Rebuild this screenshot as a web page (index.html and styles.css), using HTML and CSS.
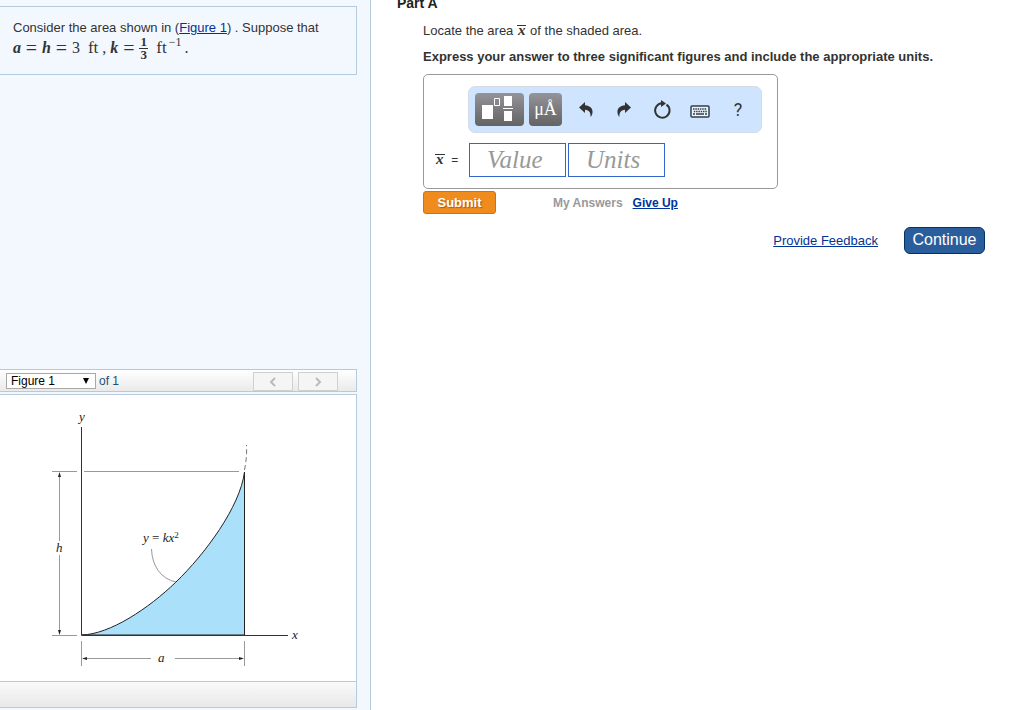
FILE: index.html
```html
<!DOCTYPE html>
<html lang="en">
<head>
    <meta charset="utf-8">
    <title>Centroid of an Area</title>
    <link rel="stylesheet" href="styles.css">
</head>
<body>
    <div class="page">
        <aside class="sidebar">
            <div class="problem">
                Consider the area shown in (<a href="#figure">Figure 1</a>) . Suppose that
                <div class="formula">
                    <i>a</i><span class="eq">=</span><i>h</i><span class="eq">=</span><span>3</span><span class="unit">ft</span><span class="comma">,</span><i>k</i><span class="eq">=</span><span class="fraction"><span>1</span><span>3</span></span><span class="unit">ft<sup>&minus;1</sup></span><span class="stop">.</span>
                </div>
            </div>

            <div class="figure-panel" id="figure">
                <div class="figure-nav">
                    <span class="select-wrap">
                        <select id="figureSelect" aria-label="Figure">
                            <option>Figure 1</option>
                        </select>
                    </span>
                    <label for="figureSelect">of 1</label>
                    <div class="nav-buttons">
                        <button type="button" aria-label="Previous figure">
                            <svg width="8" height="10" viewBox="0 0 8 10"><path d="M6 1L2 5L6 9"/></svg>
                        </button>
                        <button type="button" aria-label="Next figure">
                            <svg width="8" height="10" viewBox="0 0 8 10"><path d="M2 1L6 5L2 9"/></svg>
                        </button>
                    </div>
                </div>
                <div class="figure-body">
                    <svg class="diagram" width="356" height="286" viewBox="0 0 356 286">
                        <!-- shaded area under the curve -->
                        <path class="area" d="M82 240C110 239 148 214 176 187C205 159 240 112 244.500 77V240Z"/>
                        <path class="dashed" d="M244.500 75C246 67 247 60 246.500 50"/>
                        <!-- axes -->
                        <path class="axis" d="M81.500 32V240.500H288"/>
                        <!-- dimension lines -->
                        <path class="dim" d="M52 76.500H77M84 76.500H239M52 240.500H77M59.500 80V146M59.500 160V238"/>
                        <path class="dim" d="M81.500 246V271M244.500 246V271M84 263.500H151M175 263.500H242"/>
                        <path class="dim" d="M151.500 154C152 171 161 184 176 187"/>
                        <path class="arrow" d="M59.500 77L61 82H58ZM59.500 240L61 235H58ZM82 263.500L87 262V265ZM244 263.500L239 262V265Z"/>
                        <text x="79" y="26">y</text>
                        <text x="292" y="244">x</text>
                        <text x="56" y="157">h</text>
                        <text x="158" y="267">a</text>
                        <text x="143" y="147">y <tspan class="upright">=</tspan> kx<tspan class="power" dy="-4">2</tspan></text>
                    </svg>
                </div>
                <div class="figure-footer"></div>
            </div>
        </aside>

        <main class="content">
            <h2>Part A</h2>
            <div class="part">
                <p>Locate the area <i class="xbar">x</i> of the shaded area.</p>
                <p><b>Express your answer to three significant figures and include the appropriate units.</b></p>

                <form class="answer">
                    <div class="answer-box">
                        <div class="toolbar">
                            <button type="button" class="tool tool-wide" aria-label="Templates">
                                <svg width="49" height="33" viewBox="0 0 49 33">
                                    <path fill="#fff" d="M7 12H18V26H7ZM29 3H37V13H29ZM29 18H37V28H29ZM28 15H38V16H28Z"/>
                                    <path fill="none" stroke="#fff" d="M19.500 5.500H24.500V12.500H19.500Z"/>
                                </svg>
                            </button>
                            <button type="button" class="tool">&mu;&Aring;</button>
                            <div class="icons">
                                <button type="button" aria-label="Undo">
                                    <svg width="16" height="16" viewBox="0 0 16 16"><path fill="#333" d="M1 5.500L7 0V3.200C12 3.500 15 6.500 14.500 10.500C14.300 12.500 13.500 14 12.500 15C13 11.500 11.500 8 7 7.800V11Z"/></svg>
                                </button>
                                <button type="button" aria-label="Redo">
                                    <svg width="16" height="16" viewBox="0 0 16 16"><path fill="#333" d="M15 5.500L9 0V3.200C4 3.500 1 6.500 1.500 10.500C1.700 12.500 2.500 14 3.500 15C3 11.500 4.500 8 9 7.800V11Z"/></svg>
                                </button>
                                <button type="button" aria-label="Reset">
                                    <svg width="18" height="20" viewBox="0 0 18 20">
                                        <path fill="none" stroke="#333" stroke-width="2" d="M13.500 4.600A7.200 7.200 0 1 1 9 3.300"/>
                                        <path fill="#333" d="M8 0L13 3.400L8 7Z"/>
                                    </svg>
                                </button>
                                <button type="button" aria-label="Keyboard">
                                    <svg width="20" height="16" viewBox="0 0 20 16">
                                        <rect x="1" y="4" width="18" height="11" rx="1" fill="#eef5ff" stroke="#333c48" stroke-width="1.500"/>
                                        <path fill="none" stroke="#333c48" stroke-width="1.300" stroke-dasharray="1.500 .8" d="M3 7H17M3.800 9.500H17"/>
                                        <path fill="none" stroke="#333c48" stroke-width="1.300" d="M3 12H5M6 12H14M15 12H17"/>
                                    </svg>
                                </button>
                                <button type="button" class="help">?</button>
                            </div>
                        </div>
                        <div class="fields">
                            <label for="value"><i class="xbar">x</i>&nbsp; =</label>
                            <input type="text" id="value" placeholder="Value">
                            <input type="text" id="units" placeholder="Units" aria-label="Units">
                        </div>
                    </div>
                    <div class="actions">
                        <button type="submit" class="submit">Submit</button>
                        <span class="my-answers">My Answers</span>
                        <a href="#">Give Up</a>
                    </div>
                </form>
            </div>

            <div class="page-actions">
                <a href="#">Provide Feedback</a>
                <button type="button" class="continue">Continue</button>
            </div>
        </main>
    </div>
</body>
</html>
```

FILE: styles.css
```css
* {
    box-sizing: border-box;
}
body {
    margin: 0;
    font-family: "Liberation Sans", Arial, sans-serif;
    font-size: 13px;
    line-height: 16px;
    color: #333;
    background: #fff;
}
a {
    color: #039;
}
button {
    font-family: inherit;
    padding: 0;
    cursor: pointer;
}
svg {
    display: block;
}
.page {
    display: flex;
    height: 100vh;
    overflow: hidden;
}

/* left column */
.sidebar {
    display: flex;
    flex-direction: column;
    flex: 0 0 371px;
    padding: 6px 13px 2px 0;
    background: #f3f8ff;
    border-right: 1px solid #b6cade;
}
.problem {
    padding: 13px 12px 11px 13px;
    border: 1px solid #b6cade;
    border-left: 0;
}
.formula {
    display: flex;
    align-items: center;
    height: 28px;
    margin-top: -2px;
    margin-bottom: 1px;
    font-family: "Liberation Serif", serif;
    font-size: 16px;
}
.formula i {
    font-weight: bold;
}
.eq {
    width: 21px;
    font-size: 20px;
    text-align: center;
}
.unit {
    margin-left: 8px;
    font-size: 17px;
}
.unit sup {
    font-size: 12px;
    line-height: 1px;
    margin-left: 2px;
}
.comma {
    margin: 0 4px;
}
.stop {
    margin-left: 3px;
}
.fraction {
    display: flex;
    flex-direction: column;
    width: 9px;
    font-size: 13px;
    font-weight: bold;
    line-height: 12px;
    text-align: center;
}
.fraction span:first-child {
    border-bottom: 1px solid #333;
}
.figure-panel {
    margin-top: auto;
}
.figure-nav {
    display: flex;
    align-items: center;
    gap: 3px;
    height: 23px;
    padding: 0 18px 0 6px;
    font-size: 12px;
    background: linear-gradient(#fff, #eaeaea);
    border: 1px solid #b6cade;
    border-left: 0;
}
.figure-nav label {
    color: #1f4e79;
}
.select-wrap {
    position: relative;
}
.select-wrap::after {
    content: "";
    position: absolute;
    right: 7px;
    top: 5px;
    border: 3px solid transparent;
    border-top: 6px solid #000;
    border-bottom: 0;
    pointer-events: none;
}
select {
    display: block;
    appearance: none;
    width: 90px;
    height: 16px;
    padding: 0 4px;
    font-family: inherit;
    font-size: 12px;
    line-height: 14px;
    color: #000;
    background: #fff;
    border: 1px solid #a9a9a9;
    border-radius: 0;
}
.nav-buttons {
    display: flex;
    align-self: flex-end;
    gap: 5px;
    margin-left: auto;
}
.nav-buttons button {
    display: flex;
    align-items: center;
    justify-content: center;
    width: 40px;
    height: 19px;
    background: #f5f5f5;
    border: 1px solid #d0d0d0;
}
.nav-buttons path {
    fill: none;
    stroke: #bbb;
    stroke-width: 2;
}
.figure-body {
    margin-top: 2px;
    background: #fff;
    border: 1px solid #b6cade;
    border-left: 0;
}
.figure-footer {
    height: 26px;
    background: linear-gradient(#fafafa, #e8e8e8);
    border: 1px solid #b6cade;
    border-width: 0 1px 1px 0;
}
.diagram text {
    font-family: "Liberation Serif", serif;
    font-size: 13px;
    font-style: italic;
    fill: #222;
}
.diagram .upright {
    font-style: normal;
}
.diagram .power {
    font-size: 9px;
    font-style: normal;
}
.area {
    fill: #aae0fa;
    stroke: #222;
}
.axis, .dim, .dashed {
    fill: none;
    stroke: #333;
}
.dim {
    stroke: #999;
}
.dashed {
    stroke: #777;
    stroke-dasharray: 5 3;
}
.arrow {
    fill: #222;
}

/* right column */
.content {
    flex: 1;
    padding: 0 24px 0 26px;
}
h2 {
    margin: -5px 0 12px;
    font-size: 14px;
    line-height: 16px;
    color: #222;
}
.part {
    margin-left: 26px;
}
p {
    margin: 0 0 10px;
}
.answer {
    margin-top: -1px;
}
.xbar {
    display: inline-block;
    padding: 0 1px;
    font-family: "Liberation Serif", serif;
    font-size: 15px;
    font-weight: bold;
    line-height: 9px;
    border-top: 1px solid #333;
}
.answer-box {
    width: 355px;
    height: 115px;
    padding: 11px 15px 0 11px;
    border: 1px solid #999;
    border-radius: 5px;
}
.toolbar {
    display: flex;
    align-items: center;
    gap: 5px;
    height: 47px;
    margin-left: 33px;
    padding: 0 0 0 6px;
    background: #cfe5ff;
    border: 1px solid #d6dce4;
    border-radius: 7px;
}
.tool {
    flex: none;
    width: 33px;
    height: 33px;
    font-family: "Liberation Serif", serif;
    font-size: 18px;
    color: #fff;
    background: linear-gradient(#94949a, #636363);
    border: 0;
    border-radius: 4px;
}
.tool-wide {
    width: 49px;
}
.icons {
    display: flex;
}
.icons button {
    display: flex;
    align-items: center;
    justify-content: center;
    width: 38px;
    height: 33px;
    color: #333;
    background: none;
    border: 0;
}
.icons .help {
    font-family: Roboto, sans-serif;
    font-size: 18px;
}
.fields {
    display: flex;
    align-items: center;
    gap: 2px;
    margin-top: 10px;
    font-size: 12px;
}
.fields label {
    width: 32px;
}
.fields input {
    width: 97px;
    height: 34px;
    padding: 0 17px;
    font-family: "Liberation Serif", serif;
    font-size: 25px;
    font-style: italic;
    border: 1px solid #36c;
}
.fields input::placeholder {
    color: #999;
}
.actions {
    display: flex;
    align-items: center;
    gap: 10px;
    margin-top: 2px;
    font-size: 12px;
    font-weight: bold;
}
.submit {
    width: 73px;
    height: 23px;
    font-size: 13px;
    font-weight: bold;
    color: #fff;
    text-shadow: 1px 1px 1px #a85a10;
    background: #f08c1e;
    border: 1px solid #c9702a;
    border-radius: 3px;
}
.my-answers {
    margin-left: 47px;
    color: #999;
}
.page-actions {
    display: flex;
    align-items: center;
    justify-content: flex-end;
    gap: 26px;
    margin-top: 13px;
}
.continue {
    width: 81px;
    height: 27px;
    padding-bottom: 2px;
    font-size: 16px;
    color: #fff;
    background: #2a5d9c;
    border: 1px solid #003366;
    border-radius: 6px;
}
```
